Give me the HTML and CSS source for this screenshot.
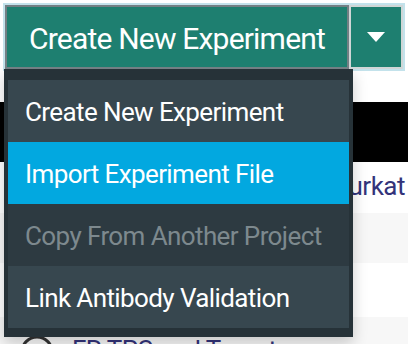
FILE: index.html
```html
<!DOCTYPE html>
<html lang="en">

<head>
    <meta charset="UTF-8">
    <meta name="viewport" content="width=device-width, initial-scale=1.0">
    <title>Experiments</title>
    <link rel="stylesheet" href="styles.css">
</head>

<body>

    <div class="page">
        <div class="list">
            <div class="row row-top"></div>
            <div class="row row-head"></div>
            <div class="row row-name"><span class="name">Burkat</span></div>
            <div class="row row-alt"></div>
            <div class="row row-plain"></div>
            <div class="row row-alt row-last">
                <svg class="check" width="34" height="34" viewBox="0 0 34 34">
                    <circle cx="17" cy="17" r="15" fill="none" stroke="#333" stroke-width="3"/>
                    <path d="M9 17 L15 23 L26 11" fill="none" stroke="#333" stroke-width="4"/>
                </svg>
                <span>FR TPS and Target</span>
            </div>
        </div>

        <div class="action">
            <div class="btn-group">
                <button type="button" class="btn btn-main">Create New Experiment</button>
                <button type="button" class="btn btn-toggle"><span class="caret"></span></button>
            </div>

            <ul class="menu">
                <li class="menu-item">Create New Experiment</li>
                <li class="menu-item active">Import Experiment File</li>
                <li class="menu-item disabled">Copy From Another Project</li>
                <li class="menu-item">Link Antibody Validation</li>
            </ul>
        </div>
    </div>

</body>

</html>
```

FILE: styles.css
```css
body {
    margin: 0;
    background-color: #fff;
    font-family: Roboto, "Open Sans", sans-serif;
}

.page {
    position: relative;
    width: 408px;
    height: 344px;
    overflow: hidden;
}

.row {
    display: flex;
    align-items: center;
}

.row-top {
    height: 102px;
}

.row-head {
    height: 60px;
    background-color: #000;
}

.row-name {
    height: 51px;
    justify-content: flex-end;
    margin-left: 353px;
    overflow: hidden;
    padding-right: 3px;
    padding-bottom: 4px;
    box-sizing: border-box;
    font-size: 26px;
    letter-spacing: -0.5px;
    color: #33337a;
    white-space: nowrap;
}

.row-alt {
    height: 50px;
    background-color: #f7f7f7;
}

.row-plain {
    height: 54px;
}

.row-last {
    align-items: flex-start;
    padding: 18px 0 0 20px;
    gap: 18px;
    font-size: 26px;
    letter-spacing: -0.5px;
    color: #33337a;
}

.action {
    position: absolute;
    top: 5px;
    left: 4px;
}

.btn-group {
    display: flex;
    margin-left: 1px;
    width: 398px;
    box-shadow: 0 0 0 2px #c3e2eb;
}

.btn {
    height: 64px;
    background-color: #1e7f70;
    color: #fff;
    font-family: inherit;
    border: 2px solid #d0d6d6;
    padding: 0;
    margin: 0;
    cursor: pointer;
}

.btn-main {
    width: 344px;
    border-color: #737f84;
    font-size: 30px;
    letter-spacing: -0.8px;
    padding-top: 2px;
}

.btn-toggle {
    width: 54px;
    display: flex;
    align-items: center;
    justify-content: center;
}

.caret {
    width: 0;
    height: 0;
    border-left: 9px solid transparent;
    border-right: 9px solid transparent;
    border-top: 10px solid #fff;
}

.menu {
    list-style: none;
    margin: 0;
    padding: 11px 4px 9px;
    width: 349px;
    box-sizing: border-box;
    background-color: #263238;
    box-shadow: 0 6px 14px rgba(0, 0, 0, 0.2);
}

.menu-item {
    height: 62px;
    display: flex;
    align-items: center;
    padding-left: 17px;
    padding-top: 2px;
    box-sizing: border-box;
    background-color: #37474f;
    color: #fff;
    font-size: 26px;
    letter-spacing: -0.6px;
}

.menu-item.active {
    background-color: #02a8e0;
}

.menu-item.disabled {
    background-color: #2d3a41;
    color: #7d898e;
}
```
